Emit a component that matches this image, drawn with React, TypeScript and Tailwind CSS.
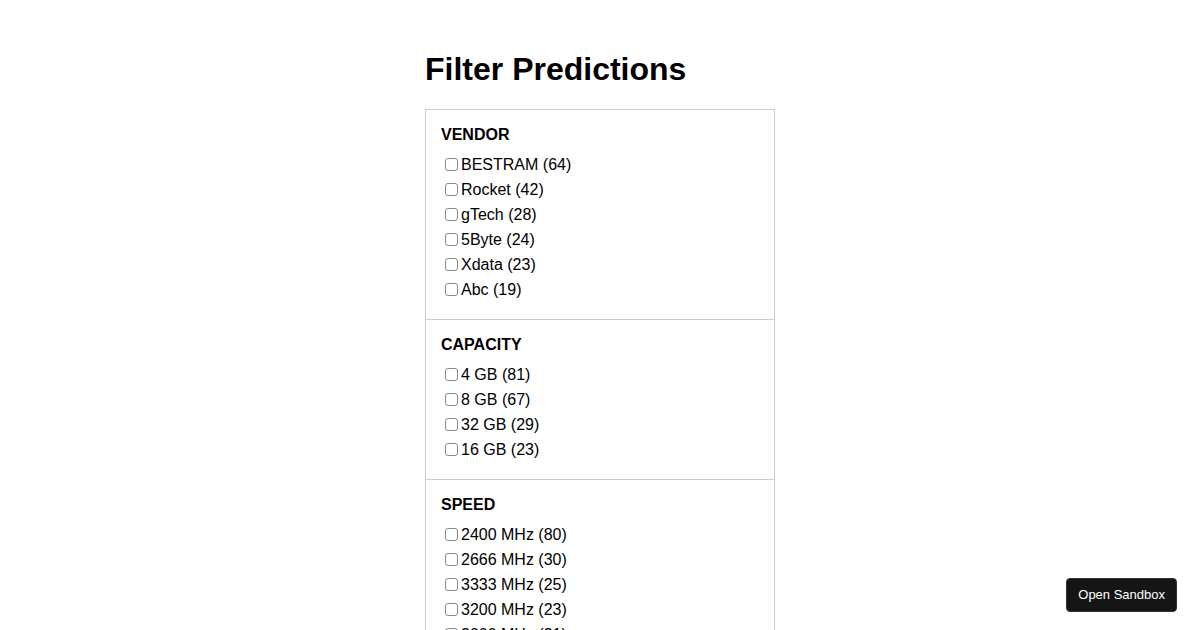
import React from 'react'

interface Option {
  label: string
  count: number
}

interface FilterGroup {
  title: string
  options: Option[]
}

const groups: FilterGroup[] = [
  {
    title: 'VENDOR',
    options: [
      { label: 'BESTRAM', count: 64 },
      { label: 'Rocket', count: 42 },
      { label: 'gTech', count: 28 },
      { label: '5Byte', count: 24 },
      { label: 'Xdata', count: 23 },
      { label: 'Abc', count: 19 },
    ],
  },
  {
    title: 'CAPACITY',
    options: [
      { label: '4 GB', count: 81 },
      { label: '8 GB', count: 67 },
      { label: '32 GB', count: 29 },
      { label: '16 GB', count: 23 },
    ],
  },
  {
    title: 'SPEED',
    options: [
      { label: '2400 MHz', count: 80 },
      { label: '2666 MHz', count: 30 },
      { label: '3333 MHz', count: 25 },
      { label: '3200 MHz', count: 23 },
      { label: '3000 MHz', count: 21 },
      { label: '2133 MHz', count: 12 },
    ],
  },
]

const FilterSection: React.FC<{ group: FilterGroup; first: boolean }> = ({ group, first }) => (
  <div className={`px-[15px] pt-[16px] pb-[17px] ${first ? '' : 'border-t border-[#cccccc]'}`}>
    <h3 className="text-[16px] leading-[18px] font-bold mb-[8px]">{group.title}</h3>
    <div className="flex flex-col">
      {group.options.map((opt) => (
        <label key={opt.label} className="flex items-center h-[25px] text-[16px]">
          <input
            type="checkbox"
            className="appearance-none ml-[4px] mr-[3px] w-[13px] h-[13px] border border-[#8a8a8a] rounded-[3px] bg-white"
          />
          <span>
            {opt.label} ({opt.count})
          </span>
        </label>
      ))}
    </div>
  </div>
)

export default function App() {
  return (
    <div
      className="min-h-screen bg-white text-black"
      style={{ fontFamily: '"Liberation Sans", Arial, sans-serif' }}
    >
      <div className="w-[350px] mx-auto pt-[51px]">
        <h1 className="text-[32px] leading-[37px] font-bold mb-[21px]">Filter Predictions</h1>
        <div className="border border-[#cccccc]">
          {groups.map((g, i) => (
            <FilterSection key={g.title} group={g} first={i === 0} />
          ))}
        </div>
      </div>

      <button className="fixed right-[23px] bottom-[18px] h-[34px] px-[11px] rounded-[4px] bg-[#151515] text-white text-[13px] border border-[#333]">
        Open Sandbox
      </button>
    </div>
  )
}
